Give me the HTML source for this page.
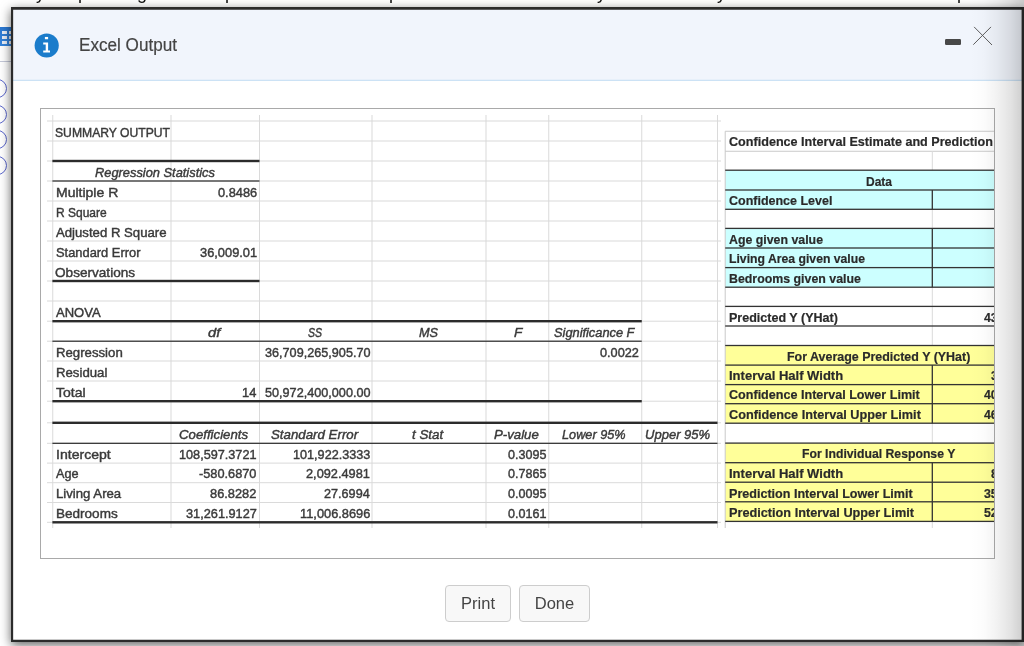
<!DOCTYPE html>
<html><head><meta charset="utf-8"><title>Excel Output</title>
<style>
html,body{margin:0;padding:0;}
body{width:1024px;height:646px;overflow:hidden;position:relative;background:#fff;font-family:"Liberation Sans",sans-serif;}
.abs{position:absolute;}
.t{position:absolute;white-space:nowrap;transform-origin:0 50%;display:block;-webkit-text-stroke:0.42px currentColor;}
.d{position:absolute;font-size:18px;line-height:20px;top:-16.6px;color:#111;transform:scaleX(1.001);}
#dialog{position:absolute;left:11px;top:7px;width:1013px;height:635px;background:#fff;overflow:hidden;box-shadow:0 3px 10px rgba(0,0,0,0.62);}
#hdr{position:absolute;left:0;top:0;width:1013px;height:73px;background:#f1f5fc;}
#rshadow{position:absolute;left:970px;top:0;width:54px;height:646px;background:linear-gradient(to right,rgba(0,0,0,0) 0%,rgba(0,0,0,0.012) 25%,rgba(0,0,0,0.05) 50%,rgba(0,0,0,0.11) 75%,rgba(0,0,0,0.2) 100%);}
#frame{position:absolute;left:40px;top:108px;width:954.5px;height:450.5px;box-sizing:border-box;border:1px solid #a9a9a9;background:#fff;overflow:hidden;}
#canvas{position:absolute;left:-41px;top:-109px;width:1100px;height:646px;filter:blur(0.45px);}
.btn{position:absolute;top:585px;height:36.5px;box-sizing:border-box;border:1px solid #cdcdcd;border-radius:4px;background:#f8f8f8;}
.btn span{position:absolute;left:0;right:0;top:0;color:#444;font-size:16.5px;line-height:35.6px;text-align:center;transform:scaleX(1.0005);}
</style></head>
<body>
<span class="d" style="left:36px">y</span><span class="d" style="left:78px">p</span><span class="d" style="left:137px">g</span><span class="d" style="left:224.5px">p</span><span class="d" style="left:389px">p</span><span class="d" style="left:597px">y</span><span class="d" style="left:717px">y</span><span class="d" style="left:956.5px">p</span>
<div class="abs" style="left:0;top:27px;width:12px;height:19px;background:linear-gradient(#2b78d2,#3685dc);">
  <div class="abs" style="left:2.2px;top:4.2px;width:4.4px;height:2.8px;background:#e8eef8"></div>
  <div class="abs" style="left:9.1px;top:4.2px;width:3px;height:2.8px;background:#e8eef8"></div>
  <div class="abs" style="left:2.2px;top:9.3px;width:4.4px;height:2.8px;background:#e8eef8"></div>
  <div class="abs" style="left:9.1px;top:9.3px;width:3px;height:2.8px;background:#e8eef8"></div>
  <div class="abs" style="left:2.2px;top:14.3px;width:4.4px;height:2.8px;background:#e8eef8"></div>
  <div class="abs" style="left:9.1px;top:14.3px;width:3px;height:2.8px;background:#e8eef8"></div>
</div>
<div class="abs" style="left:0;top:61px;width:12px;height:1px;background:#c4c8d8"></div>
<div class="abs" style="left:-12px;top:79px;width:17px;height:17px;border:1.5px solid #5a66cc;border-radius:50%"></div>
<div class="abs" style="left:-12px;top:104.5px;width:17px;height:17px;border:1.5px solid #5a66cc;border-radius:50%"></div>
<div class="abs" style="left:-12px;top:130px;width:17px;height:17px;border:1.5px solid #5a66cc;border-radius:50%"></div>
<div class="abs" style="left:-12px;top:156px;width:17px;height:17px;border:1.5px solid #5a66cc;border-radius:50%"></div>
<div id="dialog"><div id="hdr"></div></div>
<svg class="abs" style="left:0;top:0" width="1024" height="646" viewBox="0 0 1024 646">
  <rect x="11" y="79.8" width="1013" height="1" fill="#c0dbf3"/>
  <rect x="11" y="7" width="1013" height="2.75" fill="#2b2b2b"/>
  <rect x="11" y="639.75" width="1013" height="2.25" fill="#2b2b2b"/>
  <rect x="11" y="7" width="2.15" height="635" fill="#2b2b2b"/>
  <rect x="1021.6" y="7" width="2.4" height="635" fill="#2b2b2b"/>
</svg>
<svg class="abs" style="left:34px;top:32.5px" width="26" height="26" viewBox="0 0 26 26">
  <circle cx="12.7" cy="12.5" r="12.1" fill="#1b7ccb"/>
  <rect x="10.9" y="3.95" width="3.2" height="2.3" fill="#fff"/>
  <path d="M9.2 9.5 H14.1 V17.6 H16 V19.6 H9.2 V17.6 H11.7 V11.4 H9.2 Z" fill="#fff"/>
</svg>
<span class="t" style="left:79.4px;top:33.7px;font-size:18px;line-height:22px;color:#444;transform:scaleX(0.951);-webkit-text-stroke:0.2px #444">Excel Output</span>
<div class="abs" style="left:945px;top:39.3px;width:16.2px;height:5.4px;border-radius:1.2px;background:#484848"></div>
<svg class="abs" style="left:970px;top:24px" width="26" height="24" viewBox="0 0 26 24">
  <path d="M4.1 2.9 L22 21 M21 2.9 L3.3 20.7" stroke="#555" stroke-width="0.95" fill="none"/>
</svg>
<div id="frame"><div id="canvas">
<svg class="abs" style="left:0;top:0" width="1100" height="646" viewBox="0 0 1100 646"><rect x="47.00" y="120.50" width="674.00" height="1.00" fill="#dadada"/>
<rect x="47.00" y="140.50" width="674.00" height="1.00" fill="#dadada"/>
<rect x="47.00" y="160.50" width="674.00" height="1.00" fill="#dadada"/>
<rect x="47.00" y="180.50" width="674.00" height="1.00" fill="#dadada"/>
<rect x="47.00" y="200.50" width="674.00" height="1.00" fill="#dadada"/>
<rect x="47.00" y="220.50" width="674.00" height="1.00" fill="#dadada"/>
<rect x="47.00" y="240.50" width="674.00" height="1.00" fill="#dadada"/>
<rect x="47.00" y="260.50" width="674.00" height="1.00" fill="#dadada"/>
<rect x="47.00" y="280.50" width="674.00" height="1.00" fill="#dadada"/>
<rect x="47.00" y="300.50" width="674.00" height="1.00" fill="#dadada"/>
<rect x="47.00" y="320.70" width="674.00" height="1.00" fill="#dadada"/>
<rect x="47.00" y="340.70" width="674.00" height="1.00" fill="#dadada"/>
<rect x="47.00" y="360.50" width="674.00" height="1.00" fill="#dadada"/>
<rect x="47.00" y="380.50" width="674.00" height="1.00" fill="#dadada"/>
<rect x="47.00" y="400.70" width="674.00" height="1.00" fill="#dadada"/>
<rect x="47.00" y="422.30" width="674.00" height="1.00" fill="#dadada"/>
<rect x="47.00" y="442.80" width="674.00" height="1.00" fill="#dadada"/>
<rect x="47.00" y="462.60" width="674.00" height="1.00" fill="#dadada"/>
<rect x="47.00" y="482.20" width="674.00" height="1.00" fill="#dadada"/>
<rect x="47.00" y="502.00" width="674.00" height="1.00" fill="#dadada"/>
<rect x="47.00" y="521.80" width="674.00" height="1.00" fill="#dadada"/>
<rect x="52.25" y="115.00" width="1.00" height="413.00" fill="#dadada"/>
<rect x="170.50" y="115.00" width="1.00" height="413.00" fill="#dadada"/>
<rect x="259.00" y="115.00" width="1.00" height="413.00" fill="#dadada"/>
<rect x="371.50" y="115.00" width="1.00" height="413.00" fill="#dadada"/>
<rect x="485.50" y="115.00" width="1.00" height="413.00" fill="#dadada"/>
<rect x="548.25" y="115.00" width="1.00" height="413.00" fill="#dadada"/>
<rect x="641.25" y="115.00" width="1.00" height="413.00" fill="#dadada"/>
<rect x="717.00" y="115.00" width="1.00" height="413.00" fill="#dadada"/>
<rect x="52.40" y="159.80" width="207.10" height="2.40" fill="#2b2b2b"/>
<rect x="52.40" y="180.40" width="207.10" height="1.20" fill="#2b2b2b"/>
<rect x="52.40" y="279.80" width="207.10" height="2.40" fill="#2b2b2b"/>
<rect x="52.40" y="320.00" width="589.35" height="2.40" fill="#2b2b2b"/>
<rect x="52.40" y="340.60" width="589.35" height="1.20" fill="#2b2b2b"/>
<rect x="52.40" y="400.00" width="589.35" height="2.40" fill="#2b2b2b"/>
<rect x="52.40" y="421.60" width="665.10" height="2.40" fill="#2b2b2b"/>
<rect x="52.40" y="442.70" width="665.10" height="1.20" fill="#2b2b2b"/>
<rect x="52.40" y="521.10" width="665.10" height="2.40" fill="#2b2b2b"/>
<rect x="725.20" y="170.20" width="314.80" height="39.10" fill="#ccffff"/>
<rect x="725.20" y="228.40" width="314.80" height="58.80" fill="#ccffff"/>
<rect x="725.20" y="345.50" width="314.80" height="77.70" fill="#ffff99"/>
<rect x="725.20" y="443.10" width="314.80" height="78.30" fill="#ffff99"/>
<rect x="725.20" y="130.75" width="314.80" height="1.00" fill="#c9c9c9"/>
<rect x="725.20" y="150.75" width="314.80" height="1.00" fill="#c9c9c9"/>
<rect x="724.70" y="131.25" width="1.00" height="396.75" fill="#c9c9c9"/>
<rect x="931.80" y="151.25" width="1.00" height="18.95" fill="#dadada"/>
<rect x="931.80" y="209.30" width="1.00" height="19.10" fill="#dadada"/>
<rect x="931.80" y="287.20" width="1.00" height="19.20" fill="#dadada"/>
<rect x="931.80" y="306.40" width="1.00" height="39.10" fill="#dadada"/>
<rect x="931.80" y="423.20" width="1.00" height="19.90" fill="#dadada"/>
<rect x="931.80" y="521.40" width="1.00" height="6.60" fill="#dadada"/>
<rect x="725.20" y="169.55" width="314.80" height="1.30" fill="#333333"/>
<rect x="725.20" y="189.35" width="314.80" height="1.30" fill="#333333"/>
<rect x="725.20" y="208.65" width="314.80" height="1.30" fill="#333333"/>
<rect x="725.20" y="227.75" width="314.80" height="1.30" fill="#333333"/>
<rect x="725.20" y="247.35" width="314.80" height="1.30" fill="#333333"/>
<rect x="725.20" y="266.95" width="314.80" height="1.30" fill="#333333"/>
<rect x="725.20" y="286.55" width="314.80" height="1.30" fill="#333333"/>
<rect x="725.20" y="305.75" width="314.80" height="1.30" fill="#333333"/>
<rect x="725.20" y="325.35" width="314.80" height="1.30" fill="#333333"/>
<rect x="725.20" y="344.85" width="314.80" height="1.30" fill="#333333"/>
<rect x="725.20" y="364.45" width="314.80" height="1.30" fill="#333333"/>
<rect x="725.20" y="383.95" width="314.80" height="1.30" fill="#333333"/>
<rect x="725.20" y="403.05" width="314.80" height="1.30" fill="#333333"/>
<rect x="725.20" y="422.55" width="314.80" height="1.30" fill="#333333"/>
<rect x="725.20" y="442.45" width="314.80" height="1.30" fill="#333333"/>
<rect x="725.20" y="462.05" width="314.80" height="1.30" fill="#333333"/>
<rect x="725.20" y="481.55" width="314.80" height="1.30" fill="#333333"/>
<rect x="725.20" y="501.15" width="314.80" height="1.30" fill="#333333"/>
<rect x="725.20" y="520.75" width="314.80" height="1.30" fill="#333333"/>
<rect x="931.65" y="190.00" width="1.30" height="19.30" fill="#333333"/>
<rect x="931.65" y="228.40" width="1.30" height="58.80" fill="#333333"/>
<rect x="931.65" y="365.10" width="1.30" height="58.10" fill="#333333"/>
<rect x="931.65" y="462.70" width="1.30" height="58.70" fill="#333333"/></svg>
<span class="t" style="left:55.22px;top:124.70px;font-size:13.0px;line-height:16px;font-weight:normal;font-style:normal;color:#3a3a3a;transform:scaleX(0.9349);">SUMMARY OUTPUT</span>
<span class="t" style="left:95.30px;top:164.70px;font-size:13.0px;line-height:16px;font-weight:normal;font-style:italic;color:#3a3a3a;transform:scaleX(0.9878);">Regression Statistics</span>
<span class="t" style="left:55.71px;top:184.70px;font-size:13.0px;line-height:16px;font-weight:normal;font-style:normal;color:#3a3a3a;transform:scaleX(1.0776);">Multiple R</span>
<span class="t" style="left:217.60px;top:184.70px;font-size:13.0px;line-height:16px;font-weight:normal;font-style:normal;color:#3a3a3a;transform:scaleX(0.9838);">0.8486</span>
<span class="t" style="left:55.86px;top:204.70px;font-size:13.0px;line-height:16px;font-weight:normal;font-style:normal;color:#3a3a3a;transform:scaleX(0.9217);">R Square</span>
<span class="t" style="left:56.00px;top:224.70px;font-size:13.0px;line-height:16px;font-weight:normal;font-style:normal;color:#3a3a3a;transform:scaleX(1.0129);">Adjusted R Square</span>
<span class="t" style="left:55.60px;top:244.70px;font-size:13.0px;line-height:16px;font-weight:normal;font-style:normal;color:#3a3a3a;transform:scaleX(0.9907);">Standard Error</span>
<span class="t" style="left:199.60px;top:244.70px;font-size:13.0px;line-height:16px;font-weight:normal;font-style:normal;color:#3a3a3a;transform:scaleX(0.9877);">36,009.01</span>
<span class="t" style="left:55.36px;top:264.70px;font-size:13.0px;line-height:16px;font-weight:normal;font-style:normal;color:#3a3a3a;transform:scaleX(1.0453);">Observations</span>
<span class="t" style="left:56.00px;top:304.90px;font-size:13.0px;line-height:16px;font-weight:normal;font-style:normal;color:#3a3a3a;transform:scaleX(1.0031);">ANOVA</span>
<span class="t" style="left:207.54px;top:324.90px;font-size:13.0px;line-height:16px;font-weight:normal;font-style:italic;color:#3a3a3a;transform:scaleX(1.1326);">df</span>
<span class="t" style="left:307.84px;top:324.90px;font-size:13.0px;line-height:16px;font-weight:normal;font-style:italic;color:#3a3a3a;transform:scaleX(0.8089);">SS</span>
<span class="t" style="left:418.55px;top:324.90px;font-size:13.0px;line-height:16px;font-weight:normal;font-style:italic;color:#3a3a3a;transform:scaleX(0.9787);">MS</span>
<span class="t" style="left:513.79px;top:324.90px;font-size:13.0px;line-height:16px;font-weight:normal;font-style:italic;color:#3a3a3a;transform:scaleX(1.0549);">F</span>
<span class="t" style="left:554.30px;top:324.90px;font-size:13.0px;line-height:16px;font-weight:normal;font-style:italic;color:#3a3a3a;transform:scaleX(0.9849);">Significance F</span>
<span class="t" style="left:55.77px;top:344.70px;font-size:13.0px;line-height:16px;font-weight:normal;font-style:normal;color:#3a3a3a;transform:scaleX(1.0147);">Regression</span>
<span class="t" style="left:264.60px;top:344.70px;font-size:13.0px;line-height:16px;font-weight:normal;font-style:normal;color:#3a3a3a;transform:scaleX(0.9730);">36,709,265,905.70</span>
<span class="t" style="left:600.35px;top:344.70px;font-size:13.0px;line-height:16px;font-weight:normal;font-style:normal;color:#3a3a3a;transform:scaleX(0.9787);">0.0022</span>
<span class="t" style="left:55.77px;top:364.70px;font-size:13.0px;line-height:16px;font-weight:normal;font-style:normal;color:#3a3a3a;transform:scaleX(1.0152);">Residual</span>
<span class="t" style="left:55.78px;top:384.90px;font-size:13.0px;line-height:16px;font-weight:normal;font-style:normal;color:#3a3a3a;transform:scaleX(1.0795);">Total</span>
<span class="t" style="left:242.20px;top:384.90px;font-size:13.0px;line-height:16px;font-weight:normal;font-style:normal;color:#3a3a3a;transform:scaleX(0.9907);">14</span>
<span class="t" style="left:264.60px;top:384.90px;font-size:13.0px;line-height:16px;font-weight:normal;font-style:normal;color:#3a3a3a;transform:scaleX(0.9730);">50,972,400,000.00</span>
<span class="t" style="left:179.38px;top:427.00px;font-size:13.0px;line-height:16px;font-weight:normal;font-style:italic;color:#3a3a3a;transform:scaleX(1.0170);">Coefficients</span>
<span class="t" style="left:271.04px;top:427.00px;font-size:13.0px;line-height:16px;font-weight:normal;font-style:italic;color:#3a3a3a;transform:scaleX(1.0221);">Standard Error</span>
<span class="t" style="left:412.08px;top:427.00px;font-size:13.0px;line-height:16px;font-weight:normal;font-style:italic;color:#3a3a3a;transform:scaleX(1.0282);">t Stat</span>
<span class="t" style="left:494.29px;top:427.00px;font-size:13.0px;line-height:16px;font-weight:normal;font-style:italic;color:#3a3a3a;transform:scaleX(1.0160);">P-value</span>
<span class="t" style="left:562.30px;top:427.00px;font-size:13.0px;line-height:16px;font-weight:normal;font-style:italic;color:#3a3a3a;transform:scaleX(0.9775);">Lower 95%</span>
<span class="t" style="left:645.19px;top:427.00px;font-size:13.0px;line-height:16px;font-weight:normal;font-style:italic;color:#3a3a3a;transform:scaleX(1.0025);">Upper 95%</span>
<span class="t" style="left:55.70px;top:446.80px;font-size:13.0px;line-height:16px;font-weight:normal;font-style:normal;color:#3a3a3a;transform:scaleX(1.0824);">Intercept</span>
<span class="t" style="left:179.21px;top:446.80px;font-size:13.0px;line-height:16px;font-weight:normal;font-style:normal;color:#3a3a3a;transform:scaleX(0.9746);">108,597.3721</span>
<span class="t" style="left:292.96px;top:446.80px;font-size:13.0px;line-height:16px;font-weight:normal;font-style:normal;color:#3a3a3a;transform:scaleX(0.9727);">101,922.3333</span>
<span class="t" style="left:507.86px;top:446.80px;font-size:13.0px;line-height:16px;font-weight:normal;font-style:normal;color:#3a3a3a;transform:scaleX(0.9658);">0.3095</span>
<span class="t" style="left:56.00px;top:466.40px;font-size:13.0px;line-height:16px;font-weight:normal;font-style:normal;color:#3a3a3a;transform:scaleX(0.9733);">Age</span>
<span class="t" style="left:199.10px;top:466.40px;font-size:13.0px;line-height:16px;font-weight:normal;font-style:normal;color:#3a3a3a;transform:scaleX(0.9806);">-580.6870</span>
<span class="t" style="left:306.40px;top:466.40px;font-size:13.0px;line-height:16px;font-weight:normal;font-style:normal;color:#3a3a3a;transform:scaleX(0.9824);">2,092.4981</span>
<span class="t" style="left:507.86px;top:466.40px;font-size:13.0px;line-height:16px;font-weight:normal;font-style:normal;color:#3a3a3a;transform:scaleX(0.9658);">0.7865</span>
<span class="t" style="left:55.77px;top:486.20px;font-size:13.0px;line-height:16px;font-weight:normal;font-style:normal;color:#3a3a3a;transform:scaleX(1.0132);">Living Area</span>
<span class="t" style="left:210.35px;top:486.20px;font-size:13.0px;line-height:16px;font-weight:normal;font-style:normal;color:#3a3a3a;transform:scaleX(0.9868);">86.8282</span>
<span class="t" style="left:324.41px;top:486.20px;font-size:13.0px;line-height:16px;font-weight:normal;font-style:normal;color:#3a3a3a;transform:scaleX(0.9727);">27.6994</span>
<span class="t" style="left:507.86px;top:486.20px;font-size:13.0px;line-height:16px;font-weight:normal;font-style:normal;color:#3a3a3a;transform:scaleX(0.9658);">0.0095</span>
<span class="t" style="left:55.74px;top:506.00px;font-size:13.0px;line-height:16px;font-weight:normal;font-style:normal;color:#3a3a3a;transform:scaleX(1.0410);">Bedrooms</span>
<span class="t" style="left:185.85px;top:506.00px;font-size:13.0px;line-height:16px;font-weight:normal;font-style:normal;color:#3a3a3a;transform:scaleX(0.9802);">31,261.9127</span>
<span class="t" style="left:299.95px;top:506.00px;font-size:13.0px;line-height:16px;font-weight:normal;font-style:normal;color:#3a3a3a;transform:scaleX(0.9866);">11,006.8696</span>
<span class="t" style="left:507.86px;top:506.00px;font-size:13.0px;line-height:16px;font-weight:normal;font-style:normal;color:#3a3a3a;transform:scaleX(0.9658);">0.0161</span>
<span class="t" style="left:728.71px;top:134.25px;font-size:13.0px;line-height:16px;font-weight:bold;font-style:normal;color:#2a2a2a;transform:scaleX(0.9690);-webkit-text-stroke-width:0.2px;">Confidence Interval Estimate and Prediction Interval</span>
<span class="t" style="left:865.80px;top:173.70px;font-size:13.0px;line-height:16px;font-weight:bold;font-style:normal;color:#2a2a2a;transform:scaleX(0.9236);-webkit-text-stroke-width:0.2px;">Data</span>
<span class="t" style="left:728.71px;top:193.00px;font-size:13.0px;line-height:16px;font-weight:bold;font-style:normal;color:#2a2a2a;transform:scaleX(0.9609);-webkit-text-stroke-width:0.2px;">Confidence Level</span>
<span class="t" style="left:728.91px;top:231.70px;font-size:13.0px;line-height:16px;font-weight:bold;font-style:normal;color:#2a2a2a;transform:scaleX(0.9497);-webkit-text-stroke-width:0.2px;">Age given value</span>
<span class="t" style="left:729.14px;top:251.30px;font-size:13.0px;line-height:16px;font-weight:bold;font-style:normal;color:#2a2a2a;transform:scaleX(0.9398);-webkit-text-stroke-width:0.2px;">Living Area given value</span>
<span class="t" style="left:729.13px;top:270.90px;font-size:13.0px;line-height:16px;font-weight:bold;font-style:normal;color:#2a2a2a;transform:scaleX(0.9508);-webkit-text-stroke-width:0.2px;">Bedrooms given value</span>
<span class="t" style="left:729.12px;top:309.70px;font-size:13.0px;line-height:16px;font-weight:bold;font-style:normal;color:#2a2a2a;transform:scaleX(0.9640);-webkit-text-stroke-width:0.2px;">Predicted Y (YHat)</span>
<span class="t" style="left:787.12px;top:348.80px;font-size:13.0px;line-height:16px;font-weight:bold;font-style:normal;color:#2a2a2a;transform:scaleX(0.9575);-webkit-text-stroke-width:0.2px;">For Average Predicted Y (YHat)</span>
<span class="t" style="left:729.09px;top:368.30px;font-size:13.0px;line-height:16px;font-weight:bold;font-style:normal;color:#2a2a2a;transform:scaleX(1.0012);-webkit-text-stroke-width:0.2px;">Interval Half Width</span>
<span class="t" style="left:728.71px;top:387.40px;font-size:13.0px;line-height:16px;font-weight:bold;font-style:normal;color:#2a2a2a;transform:scaleX(0.9673);-webkit-text-stroke-width:0.2px;">Confidence Interval Lower Limit</span>
<span class="t" style="left:728.70px;top:406.90px;font-size:13.0px;line-height:16px;font-weight:bold;font-style:normal;color:#2a2a2a;transform:scaleX(0.9765);-webkit-text-stroke-width:0.2px;">Confidence Interval Upper Limit</span>
<span class="t" style="left:801.84px;top:446.40px;font-size:13.0px;line-height:16px;font-weight:bold;font-style:normal;color:#2a2a2a;transform:scaleX(0.9403);-webkit-text-stroke-width:0.2px;">For Individual Response Y</span>
<span class="t" style="left:729.09px;top:465.90px;font-size:13.0px;line-height:16px;font-weight:bold;font-style:normal;color:#2a2a2a;transform:scaleX(1.0012);-webkit-text-stroke-width:0.2px;">Interval Half Width</span>
<span class="t" style="left:729.11px;top:485.50px;font-size:13.0px;line-height:16px;font-weight:bold;font-style:normal;color:#2a2a2a;transform:scaleX(0.9667);-webkit-text-stroke-width:0.2px;">Prediction Interval Lower Limit</span>
<span class="t" style="left:729.11px;top:505.10px;font-size:13.0px;line-height:16px;font-weight:bold;font-style:normal;color:#2a2a2a;transform:scaleX(0.9773);-webkit-text-stroke-width:0.2px;">Prediction Interval Upper Limit</span>
<span class="t" style="left:984.30px;top:309.70px;font-size:13.0px;line-height:16px;font-weight:bold;font-style:normal;color:#2a2a2a;transform:scaleX(0.9500);-webkit-text-stroke-width:0.2px;">432,110.27</span>
<span class="t" style="left:991.41px;top:368.30px;font-size:13.0px;line-height:16px;font-weight:bold;font-style:normal;color:#2a2a2a;transform:scaleX(0.9500);-webkit-text-stroke-width:0.2px;">31,210.55</span>
<span class="t" style="left:984.30px;top:387.40px;font-size:13.0px;line-height:16px;font-weight:bold;font-style:normal;color:#2a2a2a;transform:scaleX(0.9500);-webkit-text-stroke-width:0.2px;">400,899.72</span>
<span class="t" style="left:984.30px;top:406.90px;font-size:13.0px;line-height:16px;font-weight:bold;font-style:normal;color:#2a2a2a;transform:scaleX(0.9500);-webkit-text-stroke-width:0.2px;">463,320.82</span>
<span class="t" style="left:991.21px;top:465.90px;font-size:13.0px;line-height:16px;font-weight:bold;font-style:normal;color:#2a2a2a;transform:scaleX(0.9500);-webkit-text-stroke-width:0.2px;">85,190.00</span>
<span class="t" style="left:984.11px;top:485.50px;font-size:13.0px;line-height:16px;font-weight:bold;font-style:normal;color:#2a2a2a;transform:scaleX(0.9500);-webkit-text-stroke-width:0.2px;">350,110.27</span>
<span class="t" style="left:984.11px;top:505.10px;font-size:13.0px;line-height:16px;font-weight:bold;font-style:normal;color:#2a2a2a;transform:scaleX(0.9500);-webkit-text-stroke-width:0.2px;">520,110.27</span>
</div></div>
<div class="btn" style="left:445px;width:66px;"><span>Print</span></div>
<div class="btn" style="left:519px;width:71px;"><span>Done</span></div>
<div id="rshadow"></div>
</body></html>
